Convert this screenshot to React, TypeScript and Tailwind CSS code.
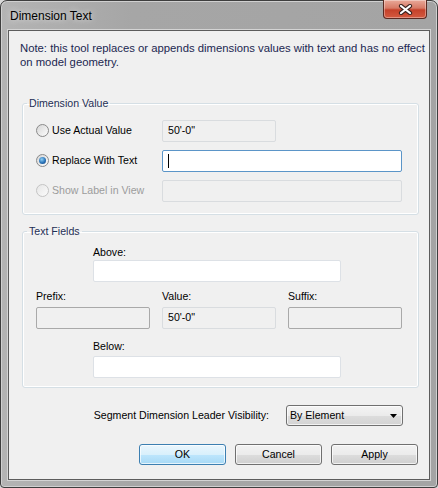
import React from 'react'

const FONT = { fontFamily: '"Liberation Sans", Arial, sans-serif' }

function Radio({ checked, disabled }: { checked?: boolean; disabled?: boolean }) {
  return (
    <span
      className={
        'flex h-[13px] w-[13px] shrink-0 items-center justify-center rounded-full border ' +
        (disabled
          ? 'border-[#c4c4c4] bg-[linear-gradient(135deg,#e6e6e6,#fbfbfb)]'
          : 'border-[#8a8a8a] bg-[linear-gradient(135deg,#d6d6d6,#fdfdfd)]')
      }
    >
      {checked && (
        <span className="h-[7px] w-[7px] rounded-full bg-[radial-gradient(circle_at_40%_35%,#8fd0f5,#2a73b8_55%,#123f78)]" />
      )}
    </span>
  )
}

function Field({
  w,
  variant,
  children
}: {
  w: string
  variant: 'disabled' | 'readonly' | 'white' | 'focus'
  children?: React.ReactNode
}) {
  const styles = {
    disabled: 'bg-[#f0f0f0] border-[#d9dcdf]',
    readonly: 'bg-[#f0f0f0] border-[#a9a9a9]',
    white: 'bg-white border-[#dde1e6]',
    focus: 'bg-white border-[#5b95c8]'
  }
  return (
    <div className={`${w} flex h-[22px] items-center rounded-[2px] border pl-[5px] text-[10.6px] text-black ${styles[variant]}`}>
      {children}
    </div>
  )
}

function Button({ label, primary }: { label: string; primary?: boolean }) {
  return (
    <button
      className={
        'h-[21px] w-[87px] rounded-[3px] border text-[10.6px] text-black shadow-[inset_0_0_0_1px_rgba(255,255,255,0.7)] ' +
        (primary
          ? 'border-[#3c7fb1] bg-[linear-gradient(#eaf6fd_0%,#d9f0fc_50%,#bee6fd_50%,#a7d9f5_100%)]'
          : 'border-[#707070] bg-[linear-gradient(#f2f2f2_0%,#ebebeb_50%,#dddddd_50%,#cfcfcf_100%)]')
      }
    >
      {label}
    </button>
  )
}

export default function App() {
  return (
    <div className="h-[488px] w-[438px] bg-[#d9d9d9]" style={FONT}>
      <div className="flex h-full flex-col rounded-t-[7px] rounded-b-[4px] border border-[#3e3e3e] bg-[linear-gradient(90deg,#b4b4b4,#a6a6a6_30%,#a4a4a4)] px-[7px] pb-[7px] shadow-[inset_0_0_0_1px_#d0d0d0]">
        {/* title bar */}
        <div className="flex h-[29px] items-start justify-between">
          <span className="pl-[2px] pt-[8px] text-[12px] leading-[14px] text-black [text-shadow:0_0_6px_rgba(255,255,255,0.8)]">
            Dimension Text
          </span>
          <div className="mr-[3px] -mt-[1px] flex h-[19px] w-[44px] items-center justify-center rounded-b-[4px] border border-t-0 border-[#5a2a22] bg-[linear-gradient(#e9a999_0%,#d77a66_45%,#c5412a_55%,#d45a40_100%)] shadow-[inset_0_0_0_1px_rgba(255,255,255,0.35)]">
            <svg width="15" height="11" viewBox="0 0 15 11">
              <path d="M3 2 L12 9 M12 2 L3 9" stroke="#3b2420" strokeWidth="4.2" strokeLinecap="round" />
              <path d="M3 2 L12 9 M12 2 L3 9" stroke="#ffffff" strokeWidth="2.2" strokeLinecap="round" />
            </svg>
          </div>
        </div>

        {/* client area */}
        <div className="flex flex-1 flex-col border border-[#5c5c5c] bg-[#f0f0f0] shadow-[0_0_0_1px_#d4d4d4]">
          <p className="pl-[11px] pr-[4px] pt-[10px] text-[11.3px] leading-[14px] text-[#1b2750]">
            Note: this tool replaces or appends dimensions values with text and has no effect
            <br />
            on model geometry.
          </p>

          <fieldset className="ml-[13px] mr-[10px] mt-[27px] rounded-[3px] border border-[#d5dfe5] shadow-[inset_0_0_0_1px_#fff]">
            <legend className="ml-[4px] px-[2px] text-[10.6px] leading-[14px] text-[#1e2f55]">Dimension Value</legend>
            <div className="flex flex-col gap-[8px] pb-[12px] pl-[13px] pt-[9px]">
              <div className="flex h-[23px] items-center">
                <div className="flex w-[126px] items-center gap-[3px] text-[10.6px] text-black">
                  <Radio />
                  Use Actual Value
                </div>
                <Field w="w-[114px]" variant="disabled">50'-0"</Field>
              </div>
              <div className="flex h-[22px] items-center">
                <div className="flex w-[126px] items-center gap-[3px] text-[10.6px] text-black">
                  <Radio checked />
                  Replace With Text
                </div>
                <Field w="w-[240px]" variant="focus">
                  <span className="h-[14px] w-[1px] bg-black" />
                </Field>
              </div>
              <div className="flex h-[22px] items-center">
                <div className="flex w-[126px] items-center gap-[3px] text-[10.6px] text-[#9c9c9c]">
                  <Radio disabled />
                  Show Label in View
                </div>
                <Field w="w-[240px]" variant="disabled" />
              </div>
            </div>
          </fieldset>

          <fieldset className="ml-[13px] mr-[10px] mt-[9px] rounded-[3px] border border-[#d5dfe5] shadow-[inset_0_0_0_1px_#fff]">
            <legend className="ml-[4px] px-[2px] text-[10.6px] leading-[14px] text-[#1e2f55]">Text Fields</legend>
            <div className="pb-[9px] pl-[13px]">
              <div className="pl-[57px] pt-[7px]">
                <div className="mb-[1px] text-[10.6px] leading-[14px] text-black">Above:</div>
                <Field w="w-[248px]" variant="white" />
              </div>
              <div className="mt-[7px] flex gap-[12px]">
                <div>
                  <div className="mb-[4px] text-[10.6px] leading-[14px] text-black">Prefix:</div>
                  <Field w="w-[114px]" variant="readonly" />
                </div>
                <div>
                  <div className="mb-[4px] text-[10.6px] leading-[14px] text-black">Value:</div>
                  <Field w="w-[114px]" variant="disabled">50'-0"</Field>
                </div>
                <div>
                  <div className="mb-[4px] text-[10.6px] leading-[14px] text-black">Suffix:</div>
                  <Field w="w-[114px]" variant="readonly" />
                </div>
              </div>
              <div className="mt-[10px] pl-[57px]">
                <div className="mb-[3px] text-[10.6px] leading-[14px] text-black">Below:</div>
                <Field w="w-[248px]" variant="white" />
              </div>
            </div>
          </fieldset>

          <div className="mr-[26px] mt-[17px] flex items-center justify-end gap-[17px]">
            <span className="text-[10.6px] text-black">Segment Dimension Leader Visibility:</span>
            <div className="flex h-[21px] w-[117px] items-center justify-between rounded-[3px] border border-[#707070] bg-[linear-gradient(#f4f4f4_0%,#ebebeb_50%,#dddddd_50%,#d3d3d3_100%)] pl-[3px] pr-[5px] text-[10.6px] text-black shadow-[inset_0_0_0_1px_rgba(255,255,255,0.7)]">
              By Element
              <svg width="7" height="4" viewBox="0 0 7 4">
                <path d="M0 0 H7 L3.5 4 Z" fill="#000" />
              </svg>
            </div>
          </div>

          <div className="mr-[11px] mt-[18px] flex justify-end gap-[9px]">
            <Button label="OK" primary />
            <Button label="Cancel" />
            <Button label="Apply" />
          </div>
        </div>
      </div>
    </div>
  )
}
